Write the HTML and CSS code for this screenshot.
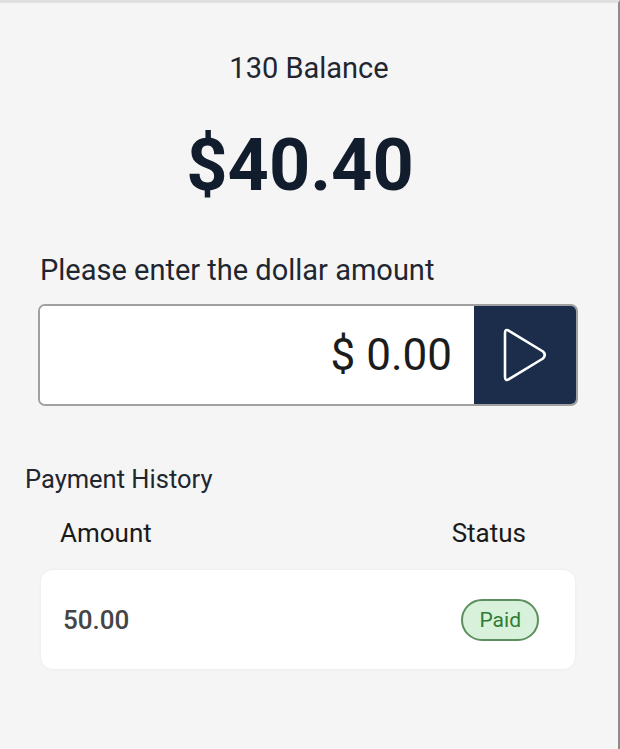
FILE: index.html
```html
<!DOCTYPE html>
<html lang="en">
<head>
  <meta charset="UTF-8" />
  <meta name="viewport" content="width=device-width, initial-scale=1.0"/>
  <title>Balance</title>
  <link rel="stylesheet" href="styles.css">
</head>
<body>
  <div class="screen">
    <div class="balance-title">130 Balance</div>
    <div class="balance-amount">$40.40</div>

    <label class="amount-label" for="dollar">Please enter the dollar amount</label>
    <div class="amount-box">
      <input type="text" id="dollar" class="amount-input" value="$ 0.00">
      <button class="go-btn" aria-label="Submit">
        <svg width="48" height="56" viewBox="0 0 48 56" fill="none">
          <path d="M4 6 Q4 1.5 8 3.8 L42 24.5 Q45.5 28 42 31.5 L8 52.2 Q4 54.5 4 50 Z" stroke="#ffffff" stroke-width="2.6" stroke-linejoin="round"/>
        </svg>
      </button>
    </div>

    <div class="history-title">Payment History</div>
    <div class="history-head">
      <span>Amount</span>
      <span>Status</span>
    </div>
    <div class="history-list" id="history"></div>
  </div>

  <script>
    const payments = [
      { amount: 50, status: "Paid" }
    ];
    const historyDiv = document.getElementById("history");

    payments.forEach((p) => {
      const row = document.createElement("div");
      row.className = "history-item";
      row.innerHTML = `
        <span class="item-amount">${p.amount.toFixed(2)}</span>
        <span class="badge">${p.status}</span>
      `;
      historyDiv.appendChild(row);
    });
  </script>
</body>
</html>
```

FILE: styles.css
```css
body {
  margin: 0;
  background-color: #f5f5f5;
  font-family: Roboto, "Liberation Sans", sans-serif;
  color: #1c2430;
}
.screen {
  width: 620px;
  height: 749px;
  box-sizing: border-box;
  border-top: 3px solid #e0e0e0;
  border-right: 2px solid #8c8c8c;
  overflow: hidden;
}
.balance-title {
  margin-top: 48px;
  text-align: center;
  font-size: 29px;
  line-height: 34px;
  color: #1f2630;
}
.balance-amount {
  margin-top: 39px;
  padding-right: 18px;
  text-align: center;
  font-size: 72px;
  line-height: 84px;
  font-weight: bold;
  color: #111c2c;
}
.amount-label {
  display: block;
  margin: 45px 0 0 40px;
  font-size: 29px;
  line-height: 34px;
  color: #1f2630;
}
.amount-box {
  display: flex;
  margin: 17px 0 0 38px;
  width: 540px;
  height: 102px;
  box-sizing: border-box;
  border: 2px solid #a0a0a0;
  border-radius: 7px;
  overflow: hidden;
  background: white;
}
.amount-input {
  flex: 1;
  min-width: 0;
  border: none;
  outline: none;
  background: white;
  text-align: right;
  padding: 0 22px 0 0;
  font-family: inherit;
  font-size: 44px;
  color: #1c1c1c;
}
.go-btn {
  width: 102px;
  border: none;
  background-color: #1b2d4a;
  display: flex;
  align-items: center;
  justify-content: center;
  padding: 0;
  cursor: pointer;
}
.history-title {
  margin: 58px 0 0 25px;
  font-size: 25.5px;
  line-height: 30px;
  color: #1f2630;
}
.history-head {
  display: flex;
  justify-content: space-between;
  margin: 24px 92px 0 60px;
  font-size: 26px;
  line-height: 30px;
  color: #1a1a1a;
}
.history-list {
  margin: 22px 43px 0 41px;
}
.history-item {
  display: flex;
  align-items: center;
  justify-content: space-between;
  height: 99px;
  box-sizing: border-box;
  padding: 0 36px 0 22px;
  background: white;
  border-radius: 12px;
  box-shadow: 0 0 3px rgba(0,0,0,0.06);
}
.item-amount {
  font-size: 26px;
  font-weight: 500;
  color: #454545;
}
.badge {
  display: inline-block;
  padding: 0 16px;
  height: 42px;
  line-height: 38px;
  box-sizing: border-box;
  border: 2px solid #5b8f5e;
  border-radius: 21px;
  background-color: #d8f1da;
  color: #2f7d35;
  font-size: 21px;
}
```
